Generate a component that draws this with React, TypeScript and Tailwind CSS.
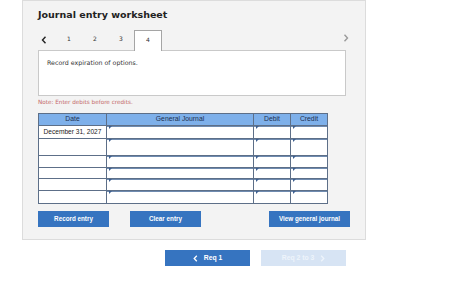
import React from 'react';

const rows = [
  { date: 'December 31, 2027', h: 'h-[13px]' },
  { date: '', h: 'h-[17px]' },
  { date: '', h: 'h-[12px]' },
  { date: '', h: 'h-[11px]' },
  { date: '', h: 'h-[12px]' },
  { date: '', h: 'h-[13px]' },
];

function EntryCell({ w }: { w: string }) {
  return (
    <td className={`${w} p-0 border border-[#5d6f88] align-top`}>
      <div className="relative h-full w-full bg-white border-l-[2px] border-b border-[#6f8bb0]">
        <span className="absolute left-0 top-0 w-0 h-0 border-t-[3px] border-r-[3px] border-t-[#3d5f8f] border-r-transparent" />
      </div>
    </td>
  );
}

export default function App() {
  return (
    <div className="w-[474px] h-[282px] bg-white relative overflow-hidden" style={{ fontFamily: '"Liberation Sans", Arial, sans-serif' }}>
      <div className="ml-[22px] w-[344px] h-[240px] bg-[#f3f3f3] border border-[#dcdcdc] pl-[15px] pr-[15px] pt-[7px]">
        <h1 className="text-[9.5px] font-bold text-[#222] leading-[14px]" style={{ fontFamily: '"DejaVu Sans", Verdana, sans-serif' }}>
          Journal entry worksheet
        </h1>

        {/* tabs */}
        <div className="mt-[7px] flex items-end h-[21px] relative" style={{ fontFamily: '"DejaVu Sans", Verdana, sans-serif' }}>
          <span className="w-[18px] pl-[3px] pb-[6px] text-[#222]">
            <svg width="6" height="8" viewBox="0 0 6 8"><path d="M4.5 0.8 L1.5 4 L4.5 7.2" fill="none" stroke="#222" strokeWidth="1.4" /></svg>
          </span>
          <span className="w-[26px] text-center text-[6px] text-[#333] pb-[7px]">1</span>
          <span className="w-[26px] text-center text-[6px] text-[#333] pb-[7px]">2</span>
          <span className="w-[26px] text-center text-[6px] text-[#333] pb-[7px]">3</span>
          <span className="w-[28px] h-[21px] -mb-px z-10 bg-white border border-b-0 border-[#a5a5a5] text-center text-[6px] text-[#333] pt-[4px]">4</span>
          <span className="absolute right-[1px] top-[5px]">
            <svg width="6" height="8" viewBox="0 0 6 8"><path d="M1.5 0.8 L4.5 4 L1.5 7.2" fill="none" stroke="#9a9a9a" strokeWidth="1.4" /></svg>
          </span>
        </div>

        <div className="w-[308px] h-[46px] bg-white border border-[#c9c9c9] pl-[8px] pt-[7px] text-[6.3px] text-[#333]" style={{ fontFamily: '"DejaVu Sans", Verdana, sans-serif' }}>
          Record expiration of options.
        </div>

        <p className="mt-[2px] text-[5.7px] text-[#c46a6a] leading-[8px]" style={{ fontFamily: '"DejaVu Sans", Verdana, sans-serif' }}>
          Note: Enter debits before credits.
        </p>

        <table className="mt-[7px] border-collapse border border-[#5d6f88] table-fixed w-[289px]">
          <thead>
            <tr className="h-[12px] bg-[#7eb0ea] text-[6.8px] text-[#1d2f4f]">
              <th className="w-[68px] p-0 font-normal border border-[#5d6f88]">Date</th>
              <th className="w-[147px] p-0 font-normal border border-[#5d6f88]">General Journal</th>
              <th className="w-[37px] p-0 font-normal border border-[#5d6f88]">Debit</th>
              <th className="w-[37px] p-0 font-normal border border-[#5d6f88]">Credit</th>
            </tr>
          </thead>
          <tbody>
            {rows.map((r, i) => (
              <tr key={i} className={`${r.h} bg-white`}>
                <td className="p-0 border border-[#5d6f88] text-center text-[6.6px] text-[#222] leading-none">{r.date}</td>
                <EntryCell w="w-[147px]" />
                <EntryCell w="w-[37px]" />
                <EntryCell w="w-[37px]" />
              </tr>
            ))}
          </tbody>
        </table>

        <div className="mt-[7px] flex items-center">
          <button className="w-[71px] h-[16px] bg-[#3674c0] text-white text-[6.3px] font-bold">Record entry</button>
          <button className="ml-[21px] w-[71px] h-[16px] bg-[#3674c0] text-white text-[6.3px] font-bold">Clear entry</button>
          <button className="ml-auto w-[81px] h-[16px] bg-[#3674c0] text-white text-[6.3px] font-bold">View general journal</button>
        </div>
      </div>

      <div className="mt-[10px] ml-[165px] flex gap-[11px]">
        <button className="w-[85px] h-[16px] bg-[#3674c0] text-white text-[6.8px] font-bold flex items-center justify-center gap-[6px]">
          <svg width="5" height="7" viewBox="0 0 5 7"><path d="M3.8 0.8 L1.2 3.5 L3.8 6.2" fill="none" stroke="#fff" strokeWidth="1.3" /></svg>
          Req 1
        </button>
        <button className="w-[85px] h-[16px] bg-[#d7e4f4] text-[#eef4fb] text-[6.8px] font-bold flex items-center justify-center gap-[6px]">
          Req 2 to 3
          <svg width="5" height="7" viewBox="0 0 5 7"><path d="M1.2 0.8 L3.8 3.5 L1.2 6.2" fill="none" stroke="#eef4fb" strokeWidth="1.3" /></svg>
        </button>
      </div>
    </div>
  );
}
